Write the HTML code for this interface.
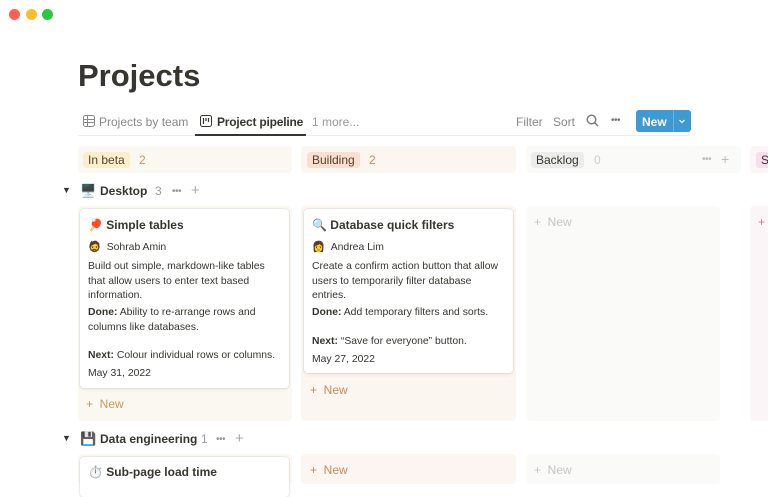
<!DOCTYPE html><html><head><style>
body{margin:0;width:768px;height:480px;overflow:hidden;background:#fff;font-family:"Liberation Sans",sans-serif;color:#37352f;position:relative}
.a{position:absolute}
.dot{width:11px;height:11px;border-radius:50%;top:9px}
.tag{padding:1px 5px;border-radius:3px;font-size:12px}
.col{border-radius:4px}
.card{background:#fff;border-radius:4px;box-shadow:0 0 0 1px rgba(15,15,15,.06),0 2px 4px rgba(15,15,15,.06);}
.t{font-size:10.4px;line-height:14.5px;color:#37352f}
b{font-weight:bold}
.d{font-size:10px;letter-spacing:-0.5px}
</style></head><body>
<div class="a dot" style="left:9px;background:#fe5f57"></div>
<div class="a dot" style="left:26px;background:#febc2e"></div>
<div class="a dot" style="left:42px;background:#28c840"></div>
<div class="a" style="left:78px;top:58px;font-size:31px;font-weight:bold">Projects</div>
<div class="a" style="left:78px;top:135px;width:612px;height:1px;background:#ededec"></div>
<svg class="a" style="left:83px;top:115px" width="12" height="12"><rect x="0.5" y="0.5" width="11" height="11" rx="2" fill="none" stroke="#888" /><path d="M0 4.5H12M0 7.5H12M4.5 0V12" stroke="#888"/></svg>
<div class="a" style="left:99px;top:115px;font-size:12px;color:#888">Projects by team</div>
<svg class="a" style="left:200px;top:115px" width="12" height="12"><rect x="0.5" y="0.5" width="11" height="11" rx="2" fill="none" stroke="#37352f"/><path d="M3.5 3V9M6 3V6M8.5 3V7" stroke="#37352f" stroke-width="1.2"/></svg>
<div class="a" style="left:217px;top:115px;font-size:12px;font-weight:bold;letter-spacing:-0.2px">Project pipeline</div>
<div class="a" style="left:195px;top:134px;width:111px;height:2px;background:#37352f"></div>
<div class="a" style="left:312px;top:115px;font-size:12px;color:#999">1 more...</div>
<div class="a" style="left:516px;top:115px;font-size:12px;color:#888">Filter</div>
<div class="a" style="left:553px;top:115px;font-size:12px;color:#888">Sort</div>
<svg class="a" style="left:586px;top:114px" width="13" height="13"><circle cx="5.5" cy="5.5" r="4.3" fill="none" stroke="#777" stroke-width="1.4"/><path d="M8.6 8.6L12 12" stroke="#777" stroke-width="1.4"/></svg>
<div class="a d" style="left:611px;top:115px;color:#777">•••</div>
<div class="a" style="left:636px;top:110px;width:55px;height:22px;background:#3e9ad2;border-radius:3px"></div>
<div class="a" style="left:673px;top:110px;width:1px;height:22px;background:#6bb3df"></div>
<div class="a" style="left:642px;top:115px;font-size:12px;font-weight:bold;color:#fff">New</div>
<svg class="a" style="left:678px;top:117px" width="8" height="8"><path d="M1.5 3L4 5.5L6.5 3" fill="none" stroke="#fff" stroke-width="1.2"/></svg>

<div class="a col" style="left:78px;top:146px;width:214px;height:27px;background:#fbf8f2"></div>
<div class="a col" style="left:301px;top:146px;width:215px;height:27px;background:#fcf6f1"></div>
<div class="a col" style="left:526px;top:146px;width:215px;height:27px;background:#fafaf9"></div>
<div class="a col" style="left:750px;top:146px;width:30px;height:27px;background:#fbf5f7"></div>
<div class="a tag" style="left:83px;top:152px;background:#fbeecc;color:#54442b">In beta</div>
<div class="a" style="left:139px;top:153px;font-size:12px;color:#c89b55">2</div>
<div class="a tag" style="left:307px;top:152px;background:#f8dfcf;color:#5c3a28">Building</div>
<div class="a" style="left:369px;top:153px;font-size:12px;color:#c88a5a">2</div>
<div class="a tag" style="left:531px;top:152px;background:#ececea;color:#37352f">Backlog</div>
<div class="a" style="left:594px;top:153px;font-size:12px;color:#ccc">0</div>
<div class="a d" style="left:702px;top:154px;color:#bbb">•••</div>
<div class="a" style="left:721px;top:151px;font-size:14px;color:#bbb">+</div>
<div class="a tag" style="left:756px;top:152px;background:#f4dfeb;color:#4c2337">S</div>

<div class="a" style="left:62px;top:185px;font-size:9px">▼</div>
<div class="a" style="left:80px;top:183px;font-size:13px">🖥️</div>
<div class="a" style="left:100px;top:184px;font-size:12px;font-weight:bold">Desktop</div>
<div class="a" style="left:155px;top:184px;font-size:12px;color:#999">3</div>
<div class="a d" style="left:172px;top:186px;color:#999">•••</div>
<div class="a" style="left:191px;top:182px;font-size:15px;color:#aaa">+</div>

<div class="a col" style="left:78px;top:206px;width:214px;height:215px;background:#fbf8f2"></div>
<div class="a col" style="left:301px;top:206px;width:215px;height:215px;background:#fcf6f1"></div>
<div class="a col" style="left:526px;top:206px;width:194px;height:215px;background:#fafaf9"></div>
<div class="a col" style="left:750px;top:206px;width:30px;height:215px;background:#fbf5f7"></div>

<div class="a card" style="left:80px;top:209px;width:209px;height:179px">
<div class="a" style="left:8px;top:9px;font-size:12px;font-weight:bold">🏓 Simple tables</div>
<div class="a t" style="left:8px;top:32px">🧔 &nbsp;Sohrab Amin</div>
<div class="a t" style="left:8px;top:51px;width:185px">Build out simple, markdown-like tables that allow users to enter text based information.</div>
<div class="a t" style="left:8px;top:97px;width:185px"><b>Done:</b> Ability to re-arrange rows and columns like databases.</div>
<div class="a t" style="left:8px;top:140px;width:205px"><b>Next:</b> Colour individual rows or columns.</div>
<div class="a t" style="left:8px;top:158px">May 31, 2022</div>
</div>
<div class="a card" style="left:304px;top:209px;width:209px;height:164px">
<div class="a" style="left:8px;top:9px;font-size:12px;font-weight:bold">🔍 Database quick filters</div>
<div class="a t" style="left:8px;top:32px">👩 &nbsp;Andrea Lim</div>
<div class="a t" style="left:8px;top:51px;width:192px">Create a confirm action button that allow users to temporarily filter database entries.</div>
<div class="a t" style="left:8px;top:97px;width:200px"><b>Done:</b> Add temporary filters and sorts.</div>
<div class="a t" style="left:8px;top:126px;width:200px"><b>Next:</b> “Save for everyone” button.</div>
<div class="a t" style="left:8px;top:144px">May 27, 2022</div>
</div>
<div class="a" style="left:86px;top:397px;font-size:12px;color:#c89b55">+ &nbsp;New</div>
<div class="a" style="left:310px;top:383px;font-size:12px;color:#c88a5a">+ &nbsp;New</div>
<div class="a" style="left:534px;top:215px;font-size:12px;color:#c4c4c2">+ &nbsp;New</div>
<div class="a" style="left:758px;top:215px;font-size:12px;color:#d07aa0">+</div>

<div class="a" style="left:62px;top:433px;font-size:9px">▼</div>
<div class="a" style="left:80px;top:431px;font-size:13px">💾</div>
<div class="a" style="left:100px;top:432px;font-size:12px;font-weight:bold">Data engineering</div>
<div class="a" style="left:201px;top:432px;font-size:12px;color:#999">1</div>
<div class="a d" style="left:216px;top:434px;color:#999">•••</div>
<div class="a" style="left:235px;top:430px;font-size:15px;color:#aaa">+</div>
<div class="a col" style="left:78px;top:454px;width:214px;height:30px;background:#fbf8f2"></div>
<div class="a col" style="left:301px;top:454px;width:215px;height:30px;background:#fcf6f1"></div>
<div class="a col" style="left:526px;top:454px;width:194px;height:30px;background:#fafaf9"></div>
<div class="a card" style="left:80px;top:457px;width:209px;height:40px">
<div class="a" style="left:8px;top:8px;font-size:12px;font-weight:bold">⏱️ Sub-page load time</div></div>
<div class="a" style="left:310px;top:463px;font-size:12px;color:#c88a5a">+ &nbsp;New</div>
<div class="a" style="left:534px;top:463px;font-size:12px;color:#c4c4c2">+ &nbsp;New</div>
</body></html>
